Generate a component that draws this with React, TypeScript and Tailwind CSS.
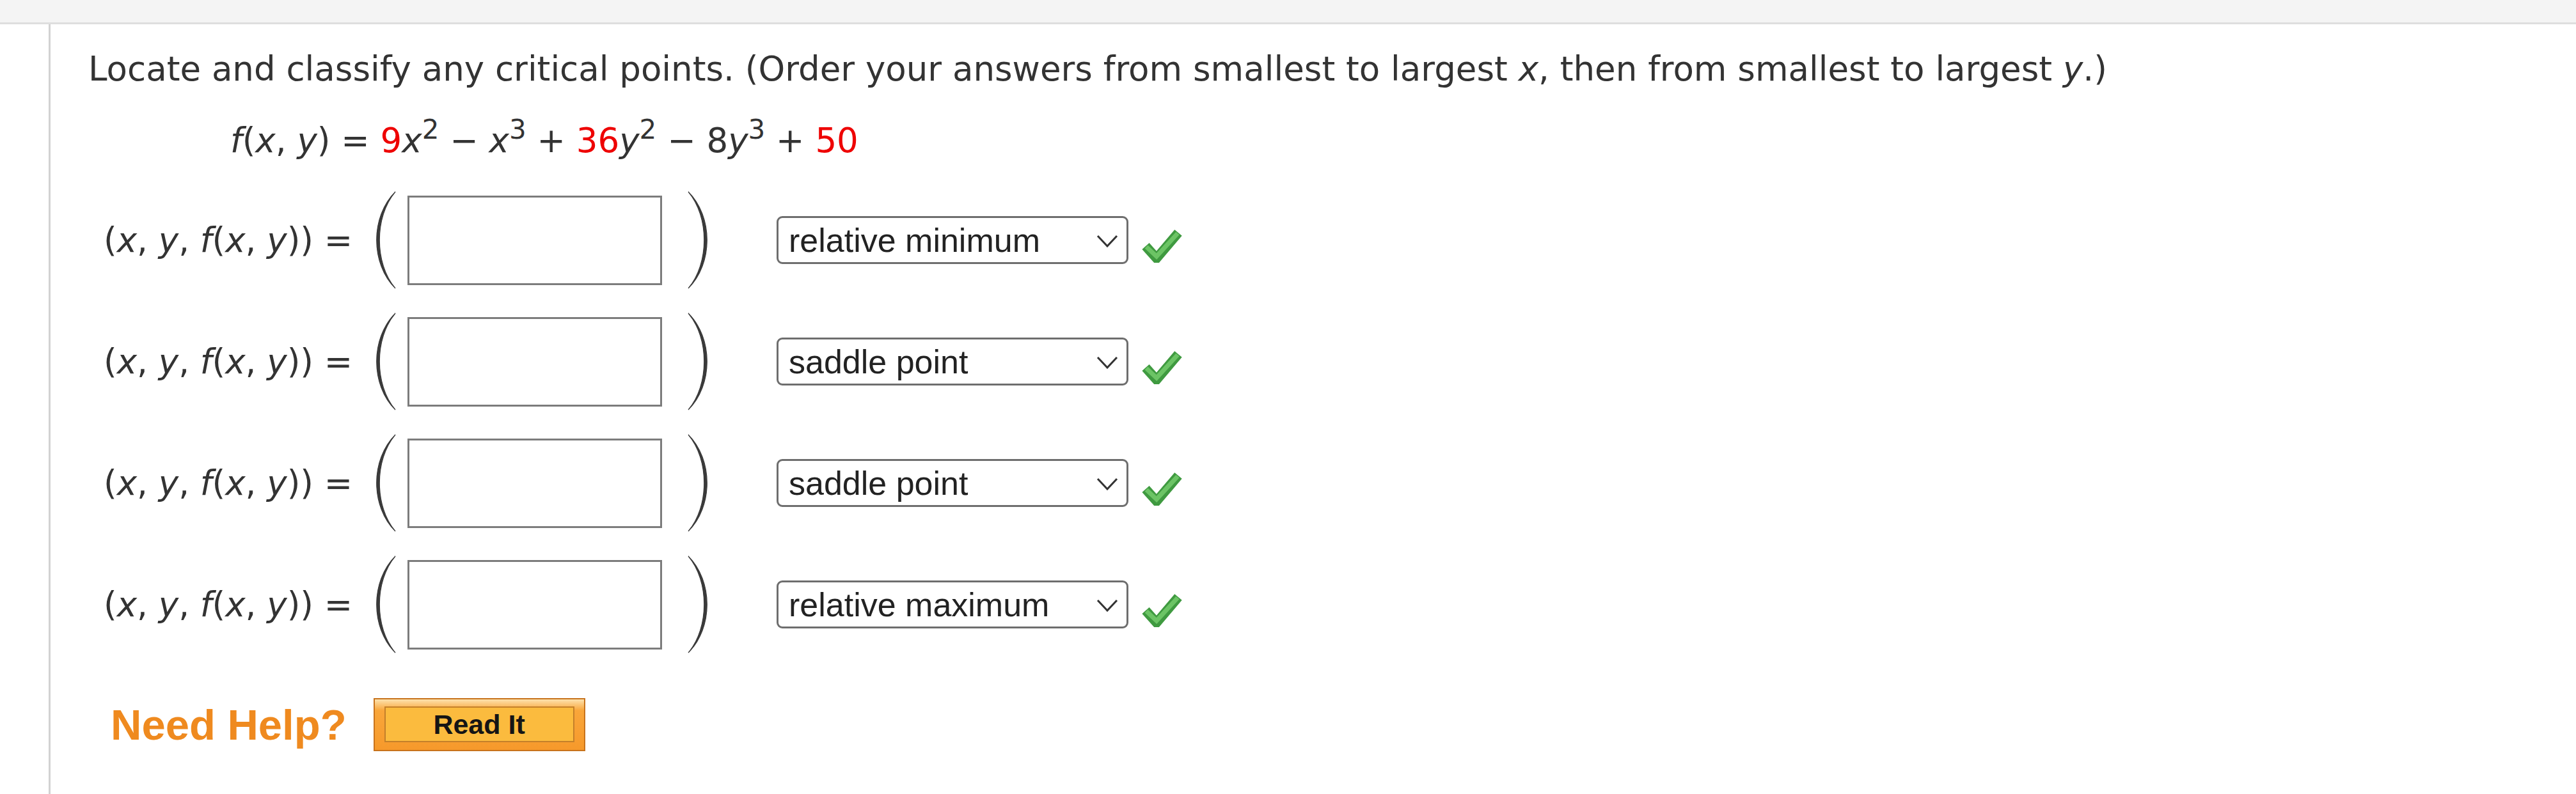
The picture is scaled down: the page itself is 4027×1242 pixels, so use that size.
import React from 'react';

const rows = ['relative minimum', 'saddle point', 'saddle point', 'relative maximum'];

function Paren({ right = false }: { right?: boolean }) {
  return (
    <svg width="36" height="153" viewBox="0 0 36 153" className={right ? 'shrink-0 -scale-x-100' : 'shrink-0'}>
      <path d="M33 1 C-6 40 -6 113 33 152 C0 113 0 40 33 1 Z" fill="#3a3a3a" stroke="#3a3a3a" strokeWidth="1.2" />
    </svg>
  );
}

function Check() {
  return (
    <svg width="63" height="56" viewBox="0 0 63 56" className="shrink-0 mt-[14px]">
      <polyline points="6,30 23,49 57,9" fill="none" stroke="#3f9a40" strokeWidth="15" strokeLinejoin="miter" />
      <polyline points="7,31 23,46 56,10" fill="none" stroke="#6cc465" strokeWidth="7" strokeLinejoin="miter" />
    </svg>
  );
}

function Label() {
  return (
    <div className="w-[447px] shrink-0 pl-[24px] whitespace-nowrap text-[53px] leading-[62px] text-[#333]">
      (<i>x</i>, <i>y</i>, <i>f</i>(<i>x</i>, <i>y</i>)) =
    </div>
  );
}

export default function App() {
  return (
    <div className="min-h-screen bg-white font-['DejaVu_Sans',Verdana,sans-serif] text-[#333]">
      <div className="h-[38px] bg-[#f4f4f4] border-b-[3px] border-[#dedede]" />
      <div className="ml-[76px] border-l-[3px] border-[#d2d2d2] min-h-[1204px] pl-[59px] pt-[39px]">
        <p className="text-[53px] leading-[62px] whitespace-nowrap">
          Locate and classify any critical points. (Order your answers from smallest to largest <i>x</i>, then from smallest to largest <i>y</i>.)
        </p>

        <p className="mt-[50px] pl-[222px] text-[53px] leading-[62px] whitespace-nowrap">
          <i>f</i>(<i>x</i>, <i>y</i>) = <span className="text-[#ee0000]">9</span><i>x</i><sup className="text-[42px]">2</sup> − <i>x</i><sup className="text-[42px]">3</sup> + <span className="text-[#ee0000]">36</span><i>y</i><sup className="text-[42px]">2</sup> − 8<i>y</i><sup className="text-[42px]">3</sup> + <span className="text-[#ee0000]">50</span>
        </p>

        <div className="mt-[48px] flex flex-col gap-[37px]">
          {rows.map((r, i) => (
            <div key={i} className="flex items-center h-[153px]">
              <Label />
              <Paren />
              <div className="ml-[16px] w-[398px] h-[140px] shrink-0 border-[3px] border-[#7c7c7c] bg-white" />
              <div className="ml-[38px]"><Paren right /></div>
              <div className="ml-[105px] w-[550px] h-[75px] shrink-0 rounded-[9px] border-[3px] border-[#6e6e6e] bg-white flex items-center justify-between pl-[16px] pr-[13px] font-['Liberation_Sans',Arial,sans-serif] text-[52px] text-[#222]">
                <span className="leading-none">{r}</span>
                <svg width="34" height="20" viewBox="0 0 34 20" className="mt-[2px]">
                  <polyline points="2,2 17,18 32,2" fill="none" stroke="#333" strokeWidth="3" />
                </svg>
              </div>
              <div className="ml-[21px]"><Check /></div>
            </div>
          ))}
        </div>

        <div className="mt-[70px] ml-[35px] flex items-center font-['Liberation_Sans',Arial,sans-serif]">
          <span className="text-[67px] font-bold text-[#ef8a1f] leading-none">Need Help?</span>
          <div className="ml-[42px] w-[331px] h-[83px] border-2 border-[#c8731c] bg-[linear-gradient(#fde2ad,#f9a63a_22%,#f6992b)] px-[15px] pt-[11px] pb-[12px]">
            <div className="h-full border-2 border-[#c4802a] bg-[#fbbb3e] flex items-center justify-center text-[43px] font-bold text-[#151515] leading-none">
              Read It
            </div>
          </div>
        </div>
      </div>
    </div>
  );
}
